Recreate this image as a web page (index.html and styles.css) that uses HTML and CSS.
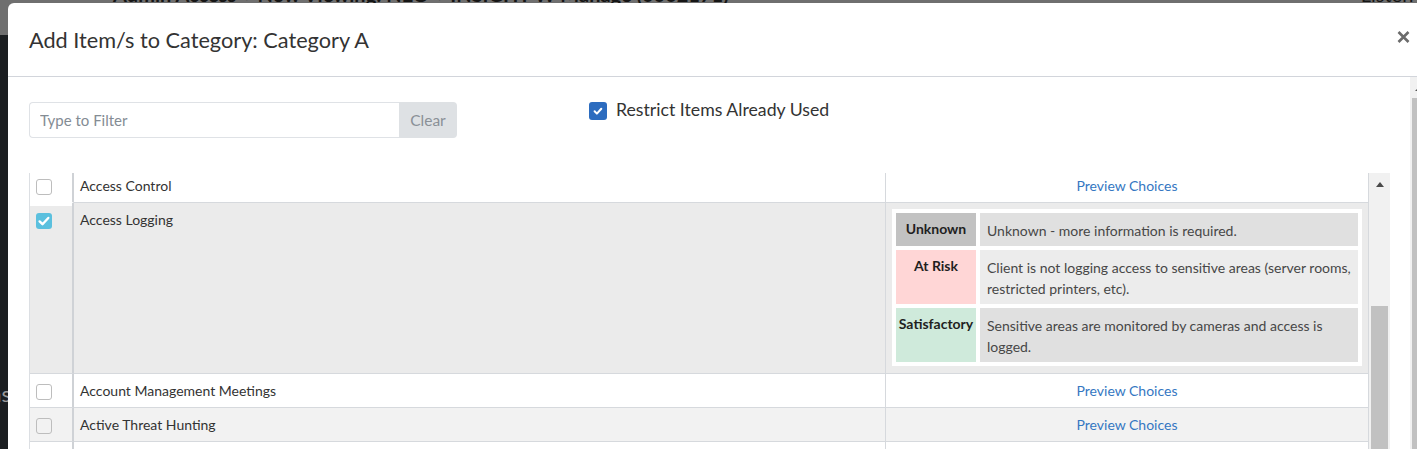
FILE: index.html
```html
<!DOCTYPE html>
<html lang="en">
<head>
<meta charset="utf-8">
<title>Add Item/s to Category</title>
<link rel="stylesheet" href="styles.css">
</head>
<body>
<div class="backdrop">
  <div class="topbar">
    <span class="topbar-dots">......</span>
    <span class="topbar-text">Admin Access • Now Viewing: NEO • INSIGHT W Manage (0002171)</span>
    <span class="topbar-dots">......</span>
    <span class="topbar-right">Listen Tour</span>
  </div>
  <div class="sidebar"><span class="side-label">Questions</span></div>
</div>

<div class="modal">
  <div class="modal-header">
    <h4 class="modal-title">Add Item/s to Category: Category A</h4>
    <span class="close" aria-label="Close">
      <svg width="13" height="12" viewBox="0 0 13 12"><path d="M1.5 1L11.5 11M11.5 1L1.5 11" stroke="#6b6b6b" stroke-width="2.6" fill="none"/></svg>
    </span>
  </div>
  <div class="modal-main">
    <div class="modal-body">
      <div class="filter-row">
        <div class="input-group">
          <input class="filter-input" type="text" placeholder="Type to Filter">
          <button class="clear-btn" type="button">Clear</button>
        </div>
        <label class="restrict">
          <span class="cb-restrict"><svg width="18" height="18" viewBox="0 0 18 18"><path d="M5.6 9.3l2.3 2.3 4.4-4.8" stroke="#fff" stroke-width="2" fill="none" stroke-linecap="round" stroke-linejoin="round"/></svg></span>
          Restrict Items Already Used
        </label>
      </div>

      <div class="table-wrap">
        <div class="table-scroll">
          <table class="items">
            <colgroup><col class="w-check"><col class="w-name"><col class="w-prev"></colgroup>
            <tbody>
              <tr class="row-first">
                <td class="c-check"><span class="cb"></span></td>
                <td class="c-name">Access Control</td>
                <td class="c-prev"><a class="preview">Preview Choices</a></td>
              </tr>
              <tr class="row-open">
                <td class="c-check"><span class="cb cb-on"><svg width="16" height="16" viewBox="0 0 16 16"><path d="M3.6 8.4l2.9 2.8 5.8-6.2" stroke="#fff" stroke-width="2.4" fill="none" stroke-linecap="round" stroke-linejoin="round"/></svg></span></td>
                <td class="c-name">Access Logging</td>
                <td class="c-prev c-choices">
                  <table class="choices">
                    <colgroup><col class="w-lab"><col class="w-desc"></colgroup>
                    <tbody>
                      <tr>
                        <td class="lab lab-unknown">Unknown</td>
                        <td class="desc">Unknown - more information is required.</td>
                      </tr>
                      <tr>
                        <td class="lab lab-risk">At Risk</td>
                        <td class="desc desc-alt">Client is not logging access to sensitive areas (server rooms, restricted printers, etc).</td>
                      </tr>
                      <tr>
                        <td class="lab lab-ok">Satisfactory</td>
                        <td class="desc">Sensitive areas are monitored by cameras and access is logged.</td>
                      </tr>
                    </tbody>
                  </table>
                </td>
              </tr>
              <tr>
                <td class="c-check"><span class="cb"></span></td>
                <td class="c-name">Account Management Meetings</td>
                <td class="c-prev"><a class="preview">Preview Choices</a></td>
              </tr>
              <tr class="row-striped">
                <td class="c-check"><span class="cb"></span></td>
                <td class="c-name">Active Threat Hunting</td>
                <td class="c-prev"><a class="preview">Preview Choices</a></td>
              </tr>
              <tr>
                <td class="c-check"><span class="cb"></span></td>
                <td class="c-name">Annual Business Review</td>
                <td class="c-prev"><a class="preview">Preview Choices</a></td>
              </tr>
            </tbody>
          </table>
        </div>
        <div class="vscroll">
          <div class="vs-up"><span class="vs-arrow"></span></div>
          <div class="vs-thumb"></div>
        </div>
      </div>
    </div>
    <div class="page-scroll">
      <div class="ps-up"><span class="ps-arrow"></span></div>
      <div class="ps-thumb"></div>
    </div>
  </div>
</div>
</body>
</html>
```

FILE: styles.css
```css
* { box-sizing: border-box; }

html, body { margin: 0; padding: 0; }

body {
  width: 1417px;
  height: 449px;
  overflow: hidden;
  position: relative;
  background: #1b1e21;
  font-family: Lato, "Open Sans", Arial, sans-serif;
}

/* page behind the modal */
.backdrop {
  height: 449px;
  display: flex;
  flex-direction: column;
}

.topbar {
  height: 35px;
  flex: none;
  background: #6f6f6f;
  display: flex;
  align-items: flex-start;
  overflow: hidden;
  white-space: nowrap;
  color: #151515;
  font-size: 20px;
  font-weight: 700;
}

.topbar span {
  margin-top: -18px;
  line-height: 24px;
}

.topbar-dots { margin-left: 90px; color: #444; font-size: 12px; }
.topbar-text { margin-left: 6px; }
.topbar-dots + .topbar-right { margin-left: auto; }
.topbar-right { margin-right: -40px; font-weight: 400; }

.sidebar {
  flex: 1;
  width: 11px;
  padding-top: 346px;
  display: flex;
  justify-content: flex-end;
  align-items: flex-start;
}

.side-label {
  white-space: nowrap;
  font-size: 22px;
  line-height: 26px;
  color: #9a9a9a;
}

/* modal */
.modal {
  position: absolute;
  left: 8px;
  top: 3px;
  width: 1419px;
  height: 470px;
  background: #fff;
  border-radius: 6px 6px 0 0;
  display: flex;
  flex-direction: column;
}

.modal-header {
  flex: none;
  height: 74px;
  border-bottom: 1px solid #d2d5db;
  display: flex;
  align-items: center;
  justify-content: space-between;
  padding: 0 17px 0 21px;
}

.modal-title {
  margin: 0;
  font-size: 21.7px;
  font-weight: 400;
  line-height: 26px;
  color: #333;
}

.close {
  display: block;
  width: 13px;
  height: 12px;
  margin-bottom: 5px;
}
.close svg { display: block; }

.modal-main {
  flex: 1;
  display: flex;
  min-height: 0;
}

.modal-body {
  flex: none;
  width: 1402px;
  padding: 25px 20px 0 21px;
}

/* filter row */
.filter-row {
  display: flex;
  align-items: flex-start;
  height: 36px;
}

.input-group {
  display: flex;
  width: 428px;
  height: 36px;
}

.filter-input {
  flex: 1;
  min-width: 0;
  height: 36px;
  margin: 0;
  border: 1px solid #dfe2e6;
  border-right: 0;
  border-radius: 4px 0 0 4px;
  padding: 0 10px;
  font-family: Lato, "Open Sans", Arial, sans-serif;
  font-size: 15px;
  color: #333;
  background: #fff;
  outline: none;
}
.filter-input::placeholder { color: #848c94; }

.clear-btn {
  width: 58px;
  height: 36px;
  margin: 0;
  border: 0;
  padding: 0;
  background: #dee1e4;
  color: #8a9097;
  font-family: Lato, "Open Sans", Arial, sans-serif;
  font-size: 15.5px;
  border-radius: 0 4px 4px 0;
}

.restrict {
  margin-left: 132px;
  margin-top: -3px;
  display: flex;
  align-items: center;
  gap: 9px;
  font-size: 17.7px;
  line-height: 22px;
  color: #333;
}

.cb-restrict {
  width: 18px;
  height: 18px;
  border-radius: 3px;
  background: #2c6cbf;
  display: block;
  margin-top: 1px;
}
.cb-restrict svg { display: block; }

/* items table */
.table-wrap {
  margin-top: 35px;
  display: flex;
  height: 300px;
}

.table-scroll {
  width: 1339px;
  flex: none;
  overflow: hidden;
  border-left: 1px solid #dcdfe3;
}

.items {
  width: 1338px;
  margin-top: -4px;
  border-collapse: separate;
  border-spacing: 0;
  table-layout: fixed;
}

.w-check { width: 44px; }
.w-name { width: 812px; }
.w-prev { width: 482px; }

.items > tbody > tr > td {
  border-bottom: 1px solid #d6d9dd;
  font-size: 14px;
  line-height: 18px;
  color: #333;
  padding: 8px 6px 7px;
  vertical-align: top;
}

.items > tbody > tr > td.c-check {
  border-right: 2px solid #cfd2d6;
  padding: 10px 6px 0;
}

.items > tbody > tr > td.c-name {
  border-right: 1px solid #d6d9dd;
}

.items > tbody > tr > td.c-prev {
  text-align: center;
}

.items > tbody > tr.row-first > td.c-check { border-bottom-color: #fff; }

.items > tbody > tr.row-open > td { background: #ebebeb; }
.items > tbody > tr.row-open > td.c-check { box-shadow: inset 0 3px 0 #fff; }
.items > tbody > tr.row-open > td.c-choices { padding: 6px 6px 7px; }

.items > tbody > tr.row-striped > td { background: #f2f2f2; }

.cb {
  display: block;
  width: 16px;
  height: 16px;
  border: 1px solid #bdbdbd;
  border-radius: 3px;
  background: #fff;
}
.row-striped .cb { background: transparent; }

.items .cb.cb-on {
  border: 0;
  background: #5bc0de;
}
.cb svg { display: block; }

.preview {
  color: #3577c2;
  text-decoration: none;
}

/* choices */
.choices {
  width: 470px;
  border-collapse: separate;
  border-spacing: 4px;
  background: #fff;
  table-layout: fixed;
  text-align: left;
}

.w-lab { width: 80px; }
.w-desc { width: 378px; }

.choices td {
  padding: 7px 7px 5px;
  font-size: 14px;
  line-height: 21px;
  color: #474747;
  vertical-align: top;
}

.choices td.lab {
  padding: 5px 0 6px;
  text-align: center;
  font-weight: 700;
  font-size: 14px;
  color: #1f1f1f;
}

.lab-unknown { background: #c2c2c2; }
.lab-risk { background: #ffd6d6; }
.lab-ok { background: #cfeadb; }

.desc { background: #e0e0e0; }
.desc.desc-alt { background: #ececec; }

/* scrollbars */
.vscroll {
  width: 22px;
  flex: none;
  border-left: 1px solid #d6d9dd;
  background: #f1f1f1;
  display: flex;
  flex-direction: column;
}

.vs-up {
  height: 133px;
  flex: none;
  display: flex;
  justify-content: center;
  padding-top: 9px;
}

.vs-arrow {
  display: block;
  width: 0;
  height: 0;
  border-left: 4.5px solid transparent;
  border-right: 4.5px solid transparent;
  border-bottom: 5px solid #4a4a4a;
}

.vs-thumb {
  flex: 1;
  background: #c1c1c1;
  margin: 0 2px;
}

.page-scroll {
  width: 17px;
  flex: none;
  background: #f1f1f1;
  display: flex;
  flex-direction: column;
}

.ps-up {
  height: 21px;
  flex: none;
  display: flex;
  justify-content: center;
  padding-top: 10px;
}

.ps-arrow {
  display: block;
  width: 0;
  height: 0;
  border-left: 4px solid transparent;
  border-right: 4px solid transparent;
  border-bottom: 4px solid #555;
}

.ps-thumb {
  flex: 1;
  background: #c1c1c1;
  margin: 0 2px;
}
```
